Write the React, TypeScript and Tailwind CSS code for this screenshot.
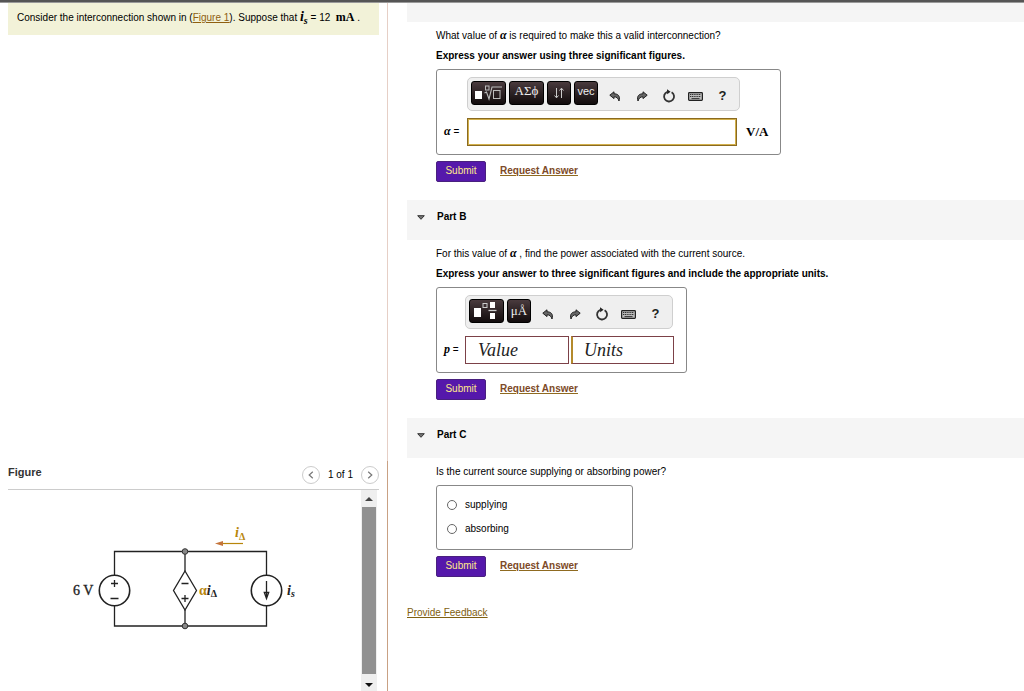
import type { ReactNode } from 'react';

function Alpha() {
  return <i className="font-['Liberation_Serif',serif] text-xs font-bold">α</i>;
}

function PartHeader({ title }: { title: string }) {
  return (
    <header className="flex h-10 items-start bg-[#f5f5f5] pt-[7px] pl-2.5">
      <button type="button" aria-label={`Toggle ${title}`} className="flex h-5 w-5 items-center">
        <svg width="8" height="5" viewBox="0 0 8 5">
          <path d="M0.7 0.7H7.3L4 4.3Z" fill="#777" stroke="#333" strokeWidth="1" />
        </svg>
      </button>
      <h2 className="font-bold">{title}</h2>
    </header>
  );
}

function SubmitRow() {
  return (
    <div className="mt-1.5 flex gap-3.5">
      <button type="submit" className="h-[21px] w-[50px] rounded-xs border border-[#49207f] bg-[#5518ab] pb-0.5 leading-4 text-[#ffe88a]">
        Submit
      </button>
      <a href="#" className="font-bold text-[#7d4a28] underline decoration-[#8f6a20]">
        Request Answer
      </a>
    </div>
  );
}

function DarkButton({ label, wide, children }: { label: string; wide?: boolean; children: ReactNode }) {
  const size = wide ? 'w-[35px]' : 'w-6';
  return (
    <button
      type="button"
      aria-label={label}
      className={`${size} flex h-6 items-center justify-center rounded-[3px] border border-black bg-linear-to-b from-[#4a3b3e] to-[#120c0d] text-[#eee]`}
    >
      {children}
    </button>
  );
}

function IconButton({ label, children }: { label: string; children: ReactNode }) {
  return (
    <button type="button" aria-label={label} className="flex h-6 w-[27px] items-center justify-center">
      {children}
    </button>
  );
}

function Toolbar({ children }: { children: ReactNode }) {
  return (
    <div className="flex h-[34px] w-fit items-start gap-[3px] rounded-[5px] border border-[#cfcfcf] bg-[#efefef] px-[3px] pt-[3px]">
      {children}
      <div className="flex pt-[3px]">
        <IconButton label="Undo">
          <svg width="12" height="11" viewBox="0 0 12 11">
            <path d="M0.8 4.2L5 0.8V2.8C9 2.8 11.5 5 10 10C9.2 7 7.5 5.8 5 5.8V7.6Z" fill="#666" stroke="#222" strokeWidth="1" strokeLinejoin="round" />
          </svg>
        </IconButton>
        <IconButton label="Redo">
          <svg width="12" height="11" viewBox="0 0 12 11">
            <path d="M11.2 4.2L7 0.8V2.8C3 2.8 0.5 5 2 10C2.8 7 4.5 5.8 7 5.8V7.6Z" fill="#666" stroke="#222" strokeWidth="1" strokeLinejoin="round" />
          </svg>
        </IconButton>
        <IconButton label="Reset">
          <svg width="14" height="14" viewBox="0 0 14 14">
            <path d="M9.6 3.2A5 5 0 1 1 5.4 2.8" fill="none" stroke="#333" strokeWidth="1.8" />
            <path d="M5 0.2L8.6 2.8L5.2 5.2Z" fill="#222" />
          </svg>
        </IconButton>
        <IconButton label="Keyboard">
          <svg width="15" height="9" viewBox="0 0 15 9">
            <rect x="0.6" y="0.6" width="13.8" height="7.8" rx="0.8" fill="#bbb" stroke="#222" strokeWidth="1.2" />
            <path d="M2 2.5H13M2 4.5H13" stroke="#333" strokeDasharray="1.2 0.6" />
            <path d="M3.5 6.6H11.5" stroke="#333" />
          </svg>
        </IconButton>
        <IconButton label="Help">
          <span className="text-[13px] font-bold text-[#222]">?</span>
        </IconButton>
      </div>
    </div>
  );
}

function Circuit() {
  return (
    <svg width="353" height="201" viewBox="8 490 353 201" className="min-w-0 shrink" role="img" aria-label="Circuit diagram">
      <g fill="none" stroke="#222" strokeWidth="1.3">
        <path d="M114.5 575V551.5H266.5V575M114.5 606V626H266.5V606M185 551.5V571M185 610V626" />
        <circle cx="114.5" cy="590.5" r="15.2" strokeWidth="1.6" />
        <circle cx="266.5" cy="590.5" r="15.2" strokeWidth="1.6" />
        <path d="M185 571L196.5 590.5L185 610L173.5 590.5Z" />
        <path d="M111 583.5H118M114.5 580V587M110.5 598.5H118.5" />
        <path d="M181.5 583.5H188.5M181.5 598.5H188.5M185 595V602" />
        <path d="M266.5 581V597M264.3 592.5H268.7L266.5 598.5Z" />
      </g>
      <circle cx="185" cy="551.5" r="2.8" fill="#888" stroke="#333" />
      <circle cx="185" cy="626" r="2.8" fill="#888" stroke="#333" />
      <path d="M221 543.5H243" stroke="#b8860b" strokeWidth="1.2" />
      <path d="M215 543.5L223 541V546Z" fill="#c4743a" />
      <g className="font-['Liberation_Serif',serif] text-sm" fill="#222" fontWeight="bold">
        <text x="73" y="595" fontWeight="normal" stroke="#222" strokeWidth="0.3">6 V</text>
        <text x="235" y="537" fill="#b8860b">
          <tspan fontStyle="italic">i</tspan>
          <tspan dy="3" className="text-[10px]">Δ</tspan>
        </text>
        <text x="199" y="595">
          <tspan fill="#b8860b">α</tspan>
          <tspan fontStyle="italic">i</tspan>
          <tspan dy="2" className="text-[10px]">Δ</tspan>
        </text>
        <text x="287" y="595" fontStyle="italic">
          i<tspan dy="2" className="text-[10px]">s</tspan>
        </text>
      </g>
    </svg>
  );
}

function Sidebar() {
  return (
    <aside className="flex flex-col">
      <div className="flex-1 border-r border-[#e6cfc6] pr-2 pl-2">
        <p className="min-h-8 bg-[#f2f2d8] px-[9px] pt-[5px] pb-1.5">
          Consider the interconnection shown in (
          <a href="#figure" className="text-[#8f5f10] underline">Figure 1</a>
          ). Suppose that{' '}
          <span className="font-['Liberation_Serif',serif] text-sm leading-4 font-bold italic">
            i<sub className="text-[10px]">s</sub>
          </span>
          {' = 12 '}&nbsp;
          <span className="font-['Liberation_Serif',serif] text-xs font-bold">mA</span> .
        </p>
      </div>
      <section id="figure" className="border-r border-[#c9a184] pl-2">
        <div className="mr-2 flex h-[29px] items-start justify-between border-b border-[#ccc]">
          <h2 className="pt-px text-[11px] font-bold text-[#333]">Figure</h2>
          <div className="flex items-center gap-2 pt-[5px]">
            <button type="button" aria-label="Previous figure" className="flex size-[18px] items-center justify-center rounded-full border border-[#ccc]">
              <svg width="6" height="8" viewBox="0 0 6 8">
                <path d="M4.8 0.8L1.2 4L4.8 7.2" fill="none" stroke="#777" strokeWidth="1.2" />
              </svg>
            </button>
            <span className="leading-[18px]">1 of 1</span>
            <button type="button" aria-label="Next figure" className="flex size-[18px] items-center justify-center rounded-full border border-[#ccc]">
              <svg width="6" height="8" viewBox="0 0 6 8">
                <path d="M1.2 0.8L4.8 4L1.2 7.2" fill="none" stroke="#777" strokeWidth="1.2" />
              </svg>
            </button>
          </div>
        </div>
        <div className="mr-2.5 flex justify-between">
          <Circuit />
          <div className="flex w-4 shrink-0 flex-col items-center bg-[#efefef]">
            <svg width="16" height="17" viewBox="0 0 16 17">
              <path d="M4 11H12L8 7Z" fill="#444" />
            </svg>
            <div className="w-3.5 flex-1 bg-[#919191]" />
            <svg width="16" height="17" viewBox="0 0 16 17">
              <path d="M4 9H12L8 13Z" fill="#111" />
            </svg>
          </div>
        </div>
      </section>
    </aside>
  );
}

const part = 'pt-1 pb-[18px] pl-[29px]';
const box = 'mt-[3px] w-fit rounded-[3px] border border-[#888]';

export default function App() {
  return (
    <div className="flex min-h-screen flex-col bg-white font-['Liberation_Sans',Arial,sans-serif] text-[10px] leading-5 text-black">
      <div className="h-[3px] border-b border-[#999] bg-[#555]" />
      <div className="grid flex-1 grid-cols-[388fr_636fr]">
        <Sidebar />
        <main className="pl-[19px]">
          <div className="h-[19px] bg-[#f5f5f5]" />
          <form className={part}>
            <p>
              What value of <Alpha /> is required to make this a valid interconnection?
            </p>
            <p className="font-bold">Express your answer using three significant figures.</p>
            <div className={`${box} grid grid-cols-[23px_auto_auto] gap-y-[7px] pt-[7px] pr-3 pb-2 pl-[7px]`}>
              <div className="col-span-2 col-start-2">
                <Toolbar>
                  <DarkButton label="Templates" wide>
                    <svg width="27" height="16" viewBox="0 0 27 16">
                      <rect x="0" y="6" width="7" height="8" fill="#fff" />
                      <path d="M9.5 8L11.5 7L14 14L17 2H27" fill="none" stroke="#bbb" strokeWidth="1.1" />
                      <rect x="10.5" y="1" width="3.5" height="4" fill="none" stroke="#bbb" />
                      <rect x="18.5" y="5.5" width="6.5" height="8" fill="none" stroke="#bbb" />
                    </svg>
                  </DarkButton>
                  <DarkButton label="Symbols" wide>
                    <span className="pb-1 font-['Liberation_Serif',serif] text-[13px] leading-4">ΑΣϕ</span>
                  </DarkButton>
                  <DarkButton label="Arrows">
                    <svg width="10" height="12" viewBox="0 0 10 12">
                      <path d="M2.5 1V10.5M0.5 8.5L2.5 10.8L4.5 8.5M7.5 11V1.5M5.5 3.5L7.5 1.2L9.5 3.5" fill="none" stroke="#ccc" />
                    </svg>
                  </DarkButton>
                  <DarkButton label="Vector">
                    <span className="pb-1 text-[11px] leading-4">vec</span>
                  </DarkButton>
                </Toolbar>
              </div>
              <label htmlFor="alpha" className="self-center whitespace-nowrap">
                <Alpha /> =
              </label>
              <input id="alpha" type="text" className="h-7 w-[270px] border border-[#8a6a20] px-2 text-base outline-1 -outline-offset-2 outline-[#d2b04c]" />
              <span className="self-center pl-[9px] font-['Liberation_Serif',serif] text-[13px] font-bold">V/A</span>
            </div>
            <SubmitRow />
          </form>

          <PartHeader title="Part B" />
          <form className={part}>
            <p>
              For this value of <Alpha /> , find the power associated with the current source.
            </p>
            <p className="font-bold">Express your answer to three significant figures and include the appropriate units.</p>
            <div className={`${box} grid grid-cols-[21px_auto] gap-y-[7px] pt-[7px] pr-3 pb-2 pl-[7px]`}>
              <div className="col-start-2">
                <Toolbar>
                  <DarkButton label="Templates" wide>
                    <svg width="27" height="18" viewBox="0 0 27 18">
                      <rect x="1" y="6" width="7" height="9" fill="#fff" />
                      <rect x="10" y="1.5" width="4" height="4" fill="none" stroke="#ccc" />
                      <rect x="17" y="0" width="5" height="6" fill="#fff" />
                      <path d="M15.5 8.5H23.5" stroke="#ccc" strokeWidth="1.3" />
                      <rect x="17" y="11" width="5" height="6" fill="#fff" />
                    </svg>
                  </DarkButton>
                  <DarkButton label="Unit symbols">
                    <span className="font-['Liberation_Serif',serif] text-[13px]">μÅ</span>
                  </DarkButton>
                </Toolbar>
              </div>
              <label htmlFor="power" className="self-center whitespace-nowrap">
                <i className="font-['Liberation_Serif',serif] text-xs font-bold">p</i> =
              </label>
              <div className="flex gap-0.5">
                <input
                  id="power"
                  type="text"
                  placeholder="Value"
                  className="h-7 w-[104px] border border-[#7c4148] px-3 font-['Liberation_Serif',serif] text-lg italic outline-none placeholder:text-[#222]"
                />
                <input
                  type="text"
                  aria-label="Units"
                  placeholder="Units"
                  className="h-7 w-[103px] border border-l-2 border-[#7c4148] border-l-[#b48a2c] px-[11px] font-['Liberation_Serif',serif] text-lg italic outline-none placeholder:text-[#222]"
                />
              </div>
            </div>
            <SubmitRow />
          </form>

          <PartHeader title="Part C" />
          <form className={part}>
            <p>Is the current source supplying or absorbing power?</p>
            <div className={`${box} flex flex-col gap-1 pt-[9px] pb-2.5 pr-[123px] pl-2.5`}>
              <label className="flex items-center gap-2">
                <input type="radio" name="power" className="size-2.5 appearance-none rounded-full border border-[#666] checked:border-[3px]" />
                supplying
              </label>
              <label className="flex items-center gap-2">
                <input type="radio" name="power" className="size-2.5 appearance-none rounded-full border border-[#666] checked:border-[3px]" />
                absorbing
              </label>
            </div>
            <SubmitRow />
          </form>

          <a href="#" className="mt-2 inline-block text-[#806010] underline">
            Provide Feedback
          </a>
        </main>
      </div>
    </div>
  );
}
